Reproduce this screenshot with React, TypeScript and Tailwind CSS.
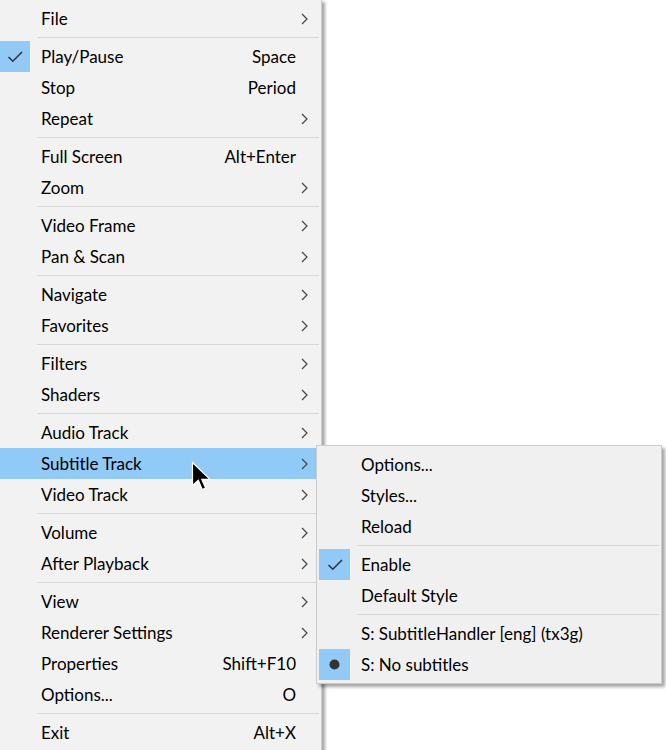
import React from "react";

type Item =
  | { sep: true }
  | {
      sep?: false;
      label: string;
      shortcut?: string;
      sub?: boolean;
      check?: boolean;
      bullet?: boolean;
      active?: boolean;
    };

const mainItems: Item[] = [
  { label: "File", sub: true },
  { sep: true },
  { label: "Play/Pause", shortcut: "Space", check: true },
  { label: "Stop", shortcut: "Period" },
  { label: "Repeat", sub: true },
  { sep: true },
  { label: "Full Screen", shortcut: "Alt+Enter" },
  { label: "Zoom", sub: true },
  { sep: true },
  { label: "Video Frame", sub: true },
  { label: "Pan & Scan", sub: true },
  { sep: true },
  { label: "Navigate", sub: true },
  { label: "Favorites", sub: true },
  { sep: true },
  { label: "Filters", sub: true },
  { label: "Shaders", sub: true },
  { sep: true },
  { label: "Audio Track", sub: true },
  { label: "Subtitle Track", sub: true, active: true },
  { label: "Video Track", sub: true },
  { sep: true },
  { label: "Volume", sub: true },
  { label: "After Playback", sub: true },
  { sep: true },
  { label: "View", sub: true },
  { label: "Renderer Settings", sub: true },
  { label: "Properties", shortcut: "Shift+F10" },
  { label: "Options...", shortcut: "O" },
  { sep: true },
  { label: "Exit", shortcut: "Alt+X" },
];

const subItems: Item[] = [
  { label: "Options..." },
  { label: "Styles..." },
  { label: "Reload" },
  { sep: true },
  { label: "Enable", check: true },
  { label: "Default Style" },
  { sep: true },
  { label: "S: SubtitleHandler [eng] (tx3g)" },
  { label: "S: No subtitles", bullet: true },
];

function Check() {
  return (
    <svg width="31" height="31" viewBox="0 0 31 31">
      <path d="M9.5 16 L13.8 20.2 L23 11" fill="none" stroke="#333333" strokeWidth="1.6" />
    </svg>
  );
}

function Bullet() {
  return (
    <svg width="31" height="31" viewBox="0 0 31 31">
      <circle cx="15.5" cy="15.5" r="5" fill="#333333" />
    </svg>
  );
}

function Chevron() {
  return (
    <svg width="7" height="12" viewBox="0 0 7 12" className="ml-[5px]">
      <path d="M1 1 L6 6 L1 11" fill="none" stroke="#444444" strokeWidth="1.2" />
    </svg>
  );
}

function MenuRows({ items, withRight }: { items: Item[]; withRight: boolean }) {
  return (
    <>
      {items.map((it, i) => {
        if (it.sep) {
          return (
            <div key={i} className="flex h-[7px] items-center pl-[38px]">
              <div className="h-px flex-1 bg-[#d7d7d7]" />
            </div>
          );
        }
        return (
          <div
            key={i}
            className={
              "flex h-[31px] items-center " + (it.active ? "bg-[#91c9f7]" : "")
            }
          >
            <div
              className={
                "flex h-[31px] w-[31px] shrink-0 items-center justify-center " +
                (it.check || it.bullet ? "bg-[#91c9f7]" : "")
              }
            >
              {it.check ? <Check /> : it.bullet ? <Bullet /> : null}
            </div>
            <div className="ml-[11px] flex-1 whitespace-nowrap">{it.label}</div>
            {withRight && (
              <>
                {it.shortcut && <div className="whitespace-nowrap">{it.shortcut}</div>}
                <div className="flex w-[23px] shrink-0 items-center">
                  {it.sub ? <Chevron /> : null}
                </div>
              </>
            )}
          </div>
        );
      })}
    </>
  );
}

function Cursor() {
  return (
    <svg
      width="22"
      height="32"
      viewBox="0 0 22 32"
      className="absolute left-[191px] top-[461px]"
    >
      <path
        d="M1.5 1.5 L1.5 24.5 L7.3 19.3 L11.2 28.5 L14.6 27 L10.8 18.3 L19 18.3 Z"
        fill="#000000"
        stroke="#ffffff"
        strokeWidth="1.2"
        strokeLinejoin="miter"
      />
    </svg>
  );
}

export default function App() {
  return (
    <div
      className="relative h-[750px] w-[666px] overflow-hidden bg-white text-[17px] text-black"
      style={{ fontFamily: '"Segoe UI", Lato, "Open Sans", sans-serif' }}
    >
      <div className="ml-[-4px] mt-[-1px] flex w-[326px] flex-col border border-[#cccccc] bg-[#f2f2f2] px-[2px] py-[3px] shadow-[3px_3px_3px_rgba(0,0,0,0.35)]">
        <MenuRows items={mainItems} withRight={true} />
      </div>

      <div className="absolute left-[316px] top-[445px] flex w-[346px] flex-col border border-[#cccccc] bg-[#f0f0f0] px-[2px] py-[3px] shadow-[3px_3px_3px_rgba(0,0,0,0.35)]">
        <MenuRows items={subItems} withRight={false} />
      </div>

      <Cursor />
    </div>
  );
}
